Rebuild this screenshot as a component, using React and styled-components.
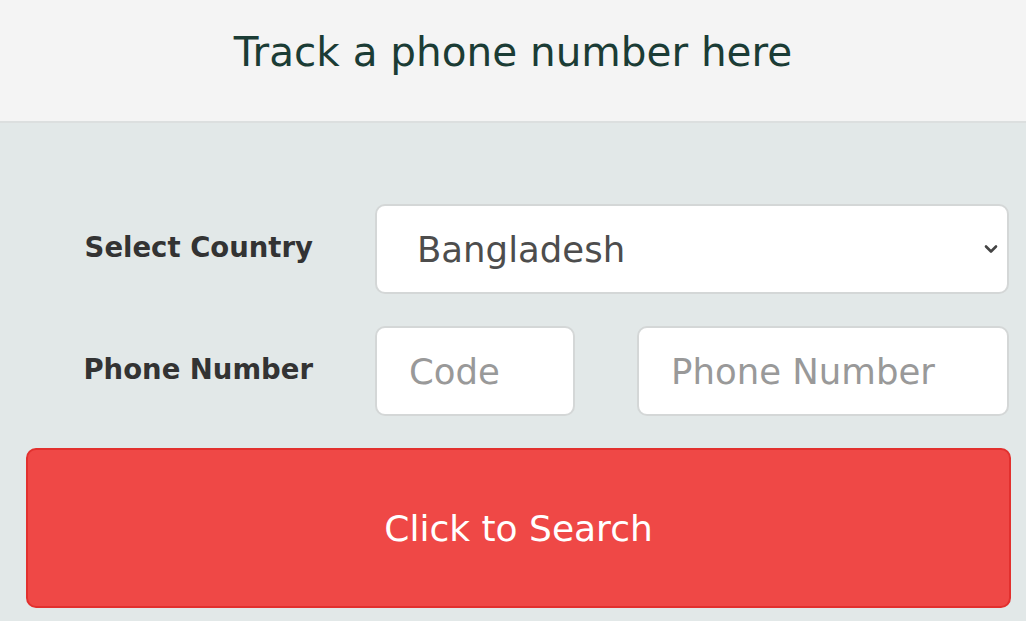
import React from "react";
import styled, { createGlobalStyle } from "styled-components";

const GlobalStyle = createGlobalStyle`
  html, body {
    margin: 0;
    padding: 0;
    background: #e2e8e8;
    font-family: "DejaVu Sans", Verdana, sans-serif;
  }
  * {
    box-sizing: border-box;
  }
`;

const Page = styled.div`
  width: 1026px;
  height: 621px;
  overflow: hidden;
  background: #e2e8e8;
`;

const Header = styled.header`
  height: 123px;
  background: #f4f4f4;
  border-bottom: 2px solid #dcdfdf;
  display: flex;
  align-items: center;
  justify-content: center;
  padding-bottom: 18px;
`;

const Title = styled.h1`
  margin: 0;
  font-size: 40.5px;
  font-weight: normal;
  color: #1b3c35;
`;

const Form = styled.form`
  padding: 81px 15px 0 26px;
  display: flex;
  flex-direction: column;
  gap: 32px;
`;

const Row = styled.div`
  display: grid;
  grid-template-columns: 287px 1fr;
  column-gap: 62px;
  align-items: center;
  padding-right: 2px;
`;

const Label = styled.label`
  text-align: right;
  font-weight: bold;
  font-size: 27.5px;
  color: #333;
  margin-top: -5px;
`;

const Field = styled.div`
  position: relative;
  display: grid;
  grid-template-columns: ${p => p.$cols || "1fr"};
  column-gap: 62px;
`;

const boxStyles = `
  width: 100%;
  height: 90px;
  border: 2px solid #d4d7d7;
  border-radius: 10px;
  background: #fff;
  font-family: "DejaVu Sans", Verdana, sans-serif;
  font-size: 35.5px;
  outline: none;
`;

const Select = styled.select`
  ${boxStyles}
  appearance: none;
  -webkit-appearance: none;
  padding: 0 0 0 40px;
  color: #4d4d4d;
`;

const Chevron = styled.svg`
  position: absolute;
  right: 10px;
  top: 50%;
  width: 16px;
  height: 10px;
  margin-top: -5px;
  pointer-events: none;
`;

const Input = styled.input`
  ${boxStyles}
  padding: 0 0 0 32px;
  color: #333;

  &::placeholder {
    color: #999;
  }
`;

const SearchButton = styled.button`
  height: 160px;
  background: #ef4846;
  border: 2px solid #e2302e;
  border-radius: 10px;
  color: #fff;
  font-family: "DejaVu Sans", Verdana, sans-serif;
  font-size: 36px;
  cursor: pointer;
`;

export default function App() {
  return (
    <Page>
      <GlobalStyle />
      <Header>
        <Title>Track a phone number here</Title>
      </Header>
      <Form onSubmit={e => e.preventDefault()}>
        <Row>
          <Label htmlFor="country">Select Country</Label>
          <Field>
            <Select id="country" defaultValue="BD">
              <option value="BD">Bangladesh</option>
              <option value="IN">India</option>
              <option value="PK">Pakistan</option>
            </Select>
            <Chevron viewBox="0 0 16 10">
              <path d="M3 2.5 L8 7.5 L13 2.5" fill="none" stroke="#444" strokeWidth="2.6" strokeLinecap="round" strokeLinejoin="round" />
            </Chevron>
          </Field>
        </Row>
        <Row>
          <Label htmlFor="phone">Phone Number</Label>
          <Field $cols="200px 1fr">
            <Input placeholder="Code" />
            <Input id="phone" placeholder="Phone Number" />
          </Field>
        </Row>
        <SearchButton type="submit">Click to Search</SearchButton>
      </Form>
    </Page>
  );
}
